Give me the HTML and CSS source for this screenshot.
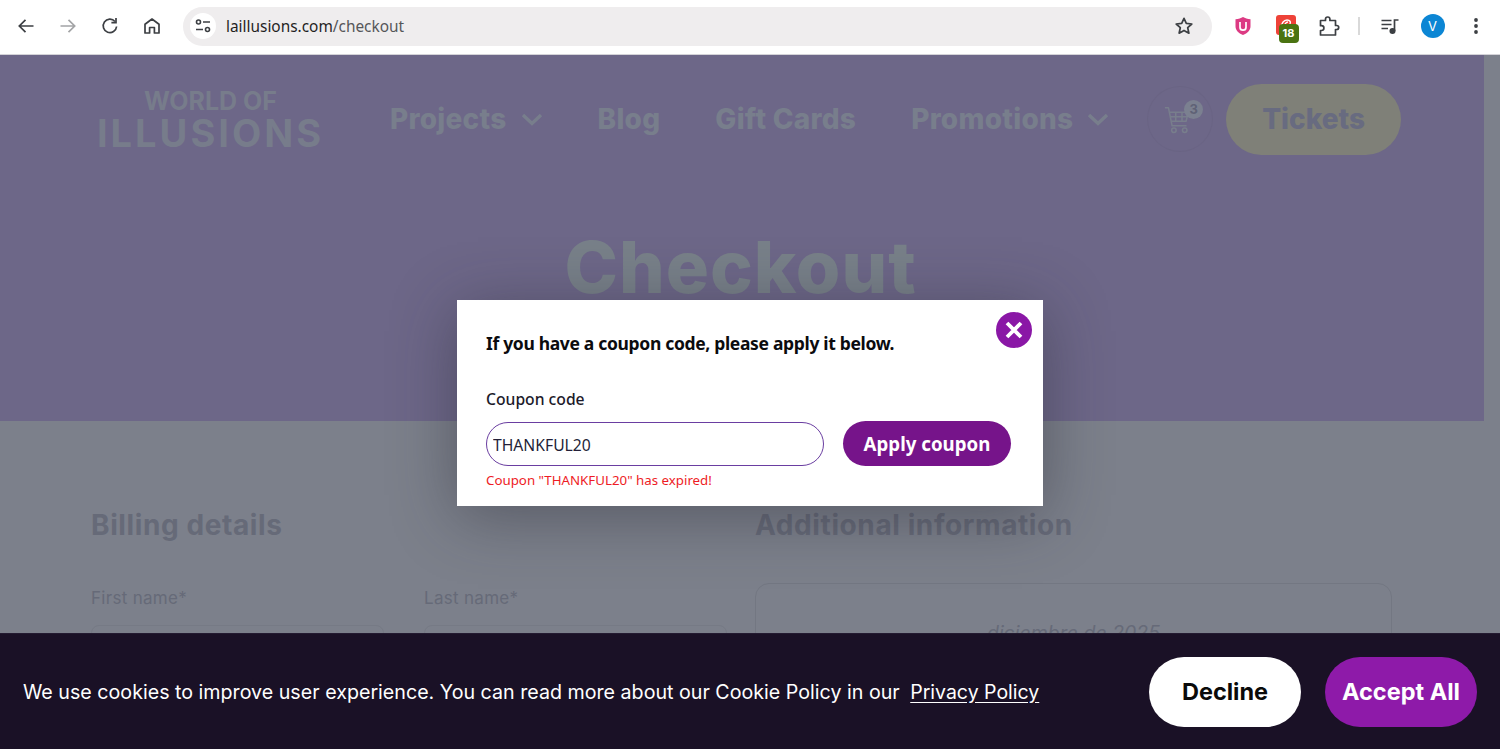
FILE: index.html
```html
<!DOCTYPE html>
<html lang="en">
<head>
  <meta charset="UTF-8">
  <meta name="viewport" content="width=device-width, initial-scale=1.0">
  <title>Checkout</title>
  <link rel="stylesheet" href="styles.css">
</head>
<body>
  <div class="toolbar">
    <button class="tool-btn" aria-label="Back">
      <svg width="20" height="20" viewBox="0 0 20 20" fill="none" stroke="#3c3f43" stroke-width="1.7"><path d="M17.5 10H3.5M9.5 3.8 3.3 10l6.2 6.2"/></svg>
    </button>
    <button class="tool-btn" aria-label="Forward">
      <svg width="20" height="20" viewBox="0 0 20 20" fill="none" stroke="#a3a4a6" stroke-width="1.7"><path d="M2.5 10h14M10.5 3.8l6.2 6.2-6.2 6.2"/></svg>
    </button>
    <button class="tool-btn" aria-label="Reload">
      <svg width="20" height="20" viewBox="0 0 20 20" fill="none" stroke="#3c3f43" stroke-width="1.7"><path d="M16.6 10.5a6.7 6.7 0 1 1-1.6-5"/><path d="M16 2v4.6h-4.6" /></svg>
    </button>
    <button class="tool-btn" aria-label="Home">
      <svg width="20" height="20" viewBox="0 0 20 20" fill="none" stroke="#3c3f43" stroke-width="1.7" stroke-linejoin="round"><path d="M3 8.3 10 3l7 5.3V17h-4.6v-5.5H7.6V17H3z"/></svg>
    </button>

    <div class="omnibox">
      <span class="site-info">
        <svg width="18" height="18" viewBox="0 0 18 18" fill="none" stroke="#3c3f43" stroke-width="1.6"><circle cx="4.5" cy="5" r="2"/><path d="M9 5h7M2 12.5h7"/><circle cx="13.5" cy="12.5" r="2"/></svg>
      </span>
      <span class="url">laillusions.com<span class="url-path">/checkout</span></span>
      <svg class="star" width="20" height="20" viewBox="0 0 20 20" fill="none" stroke="#3c3f43" stroke-width="1.7" stroke-linejoin="round"><path d="m10 2.3 2.3 5.1 5.5.6-4.1 3.7 1.2 5.5L10 14.4l-4.9 2.8 1.2-5.500L2.200 8l5.500-.6z"/></svg>
    </div>

    <div class="ext-group">
      <button class="tool-btn ext" aria-label="Shield extension">
        <svg width="18" height="20" viewBox="0 0 18 20"><path d="M9 1c2 1.300 4.500 2 7.500 2.300v7c0 4-3 7-7.500 8.700-4.500-1.700-7.500-4.700-7.500-8.700v-7C4.500 3 7 2.300 9 1z" fill="#dc3a83"/><path d="M6 6v5.200a3 3 0 0 0 6 0V6" fill="none" stroke="#fff" stroke-width="1.700"/></svg>
      </button>
      <button class="tool-btn ext" aria-label="Notes extension">
        <span class="red-ext">
          <svg width="20" height="20" viewBox="0 0 20 20"><rect width="20" height="20" rx="3" fill="#ee4238"/><path d="M5 14c0-6 3-9 6-9s4 2 3 4-4 3-5 2 1-4 3-4" fill="none" stroke="#fff" stroke-width="1.400"/></svg>
          <span class="ext-badge">18</span>
        </span>
      </button>
      <button class="tool-btn ext" aria-label="Extensions">
        <svg width="22" height="22" viewBox="0 0 22 22" fill="none" stroke="#3c3f43" stroke-width="1.700" stroke-linejoin="round"><path d="M2.500 5.500h5V4.200a2.200 2.200 0 0 1 4.400 0v1.300h5.600v5h1.200a2 2 0 0 1 0 4h-1.200v5.500h-15v-4.500h1a2.400 2.400 0 0 0 0-4.800h-1z"/></svg>
      </button>
      <span class="divider"></span>
      <button class="tool-btn ext" aria-label="Media controls">
        <svg width="20" height="20" viewBox="0 0 20 20" fill="none" stroke="#3c3f43" stroke-width="1.700"><path d="M1.500 4.500h10M1.500 8.500h10M1.500 12.500h6.500"/><circle cx="12.500" cy="15" r="2.200" fill="#3c3f43"/><path d="M14.500 15V4h4"/></svg>
      </button>
      <button class="tool-btn ext" aria-label="Profile"><span class="avatar">V</span></button>
      <button class="tool-btn ext" aria-label="Menu">
        <svg width="6" height="20" viewBox="0 0 6 20" fill="#3c3f43"><circle cx="3" cy="4" r="1.900"/><circle cx="3" cy="10" r="1.900"/><circle cx="3" cy="16" r="1.900"/></svg>
      </button>
    </div>
  </div>

  <div class="viewport">
    <div class="page">
      <section class="hero">
        <header class="site-nav">
          <div class="logo">
            <span class="logo-top">WORLD OF</span>
            <span class="logo-main">ILLUSIONS</span>
          </div>
          <nav class="nav-links">
            <a class="nav-link">Projects
              <svg width="22" height="13" viewBox="0 0 22 13" fill="none" stroke="#787e8c" stroke-width="3.400"><path d="m2 2 9 8.500L20 2"/></svg>
            </a>
            <a class="nav-link">Blog</a>
            <a class="nav-link">Gift Cards</a>
            <a class="nav-link">Promotions
              <svg width="22" height="13" viewBox="0 0 22 13" fill="none" stroke="#787e8c" stroke-width="3.400"><path d="m2 2 9 8.500L20 2"/></svg>
            </a>
          </nav>
          <div class="cart">
            <svg width="27" height="29" viewBox="0 0 30 32" fill="none" stroke="#787e8c" stroke-width="1.700" stroke-linejoin="round"><path d="M1 3h4l4 20h16"/><path d="M6 8h21l-2.500 10H8M7 13h19M13 8v10M20 8v10"/><circle cx="11" cy="28" r="2.500"/><circle cx="23" cy="28" r="2.500"/></svg>
            <span class="cart-count">3</span>
          </div>
          <a class="tickets">Tickets</a>
        </header>
        <h1 class="hero-title">Checkout</h1>
      </section>

      <section class="checkout-body">
        <div class="billing">
          <h2 class="section-title">Billing details</h2>
          <div class="name-row">
            <div class="field">
              <label class="field-label">First name*</label>
              <div class="field-input"></div>
            </div>
            <div class="field">
              <label class="field-label">Last name*</label>
              <div class="field-input"></div>
            </div>
          </div>
        </div>
        <div class="additional">
          <h2 class="section-title">Additional information</h2>
          <div class="calendar-box">
            <span class="calendar-month">diciembre de 2025</span>
          </div>
        </div>
      </section>
    </div>
    <div class="scrollbar"></div>

    <div class="modal">
      <button class="modal-close" aria-label="Close">
        <svg width="20" height="20" viewBox="0 0 20 20" fill="none" stroke="#fff" stroke-width="3.800"><path d="m3 3 14 14M17 3 3 17"/></svg>
      </button>
      <p class="modal-title">If you have a coupon code, please apply it below.</p>
      <label class="coupon-label" for="coupon">Coupon code</label>
      <div class="coupon-row">
        <input class="coupon-input" id="coupon" type="text" value="THANKFUL20">
        <button class="apply-btn">Apply coupon</button>
      </div>
      <p class="coupon-error">Coupon "THANKFUL20" has expired!</p>
    </div>

    <div class="cookie-bar">
      <p class="cookie-text">We use cookies to improve user experience. You can read more about our Cookie Policy in our <a class="cookie-link">Privacy Policy</a></p>
      <div class="cookie-actions">
        <button class="cookie-btn decline">Decline</button>
        <button class="cookie-btn accept">Accept All</button>
      </div>
    </div>
  </div>
</body>
</html>
```

FILE: styles.css
```css
* {
  box-sizing: border-box;
}

body {
  margin: 0;
  height: 749px;
  overflow: hidden;
  display: flex;
  flex-direction: column;
  font-family: Inter, "Open Sans", sans-serif;
  background-color: #7c808b;
}

button {
  font-family: inherit;
  border: none;
  padding: 0;
  cursor: pointer;
}

/* browser bar */
.toolbar {
  height: 55px;
  flex-shrink: 0;
  display: flex;
  align-items: center;
  padding: 0 0 2px 5px;
  background-color: #ffffff;
  border-bottom: 1px solid #d4d3d8;
}

.tool-btn {
  width: 42px;
  height: 36px;
  display: flex;
  align-items: center;
  justify-content: center;
  background: transparent;
}

.omnibox {
  width: 1029px;
  height: 39px;
  margin-left: 10px;
  display: flex;
  align-items: center;
  padding: 0 18px 0 7px;
  border-radius: 20px;
  background-color: #efedee;
}

.site-info {
  width: 26px;
  height: 26px;
  display: flex;
  align-items: center;
  justify-content: center;
  border-radius: 50%;
  background-color: #ffffff;
}

.url {
  margin-left: 10px;
  font-family: "Noto Sans", sans-serif;
  font-size: 15.4px;
  color: #1f1f1f;
}

.url-path {
  color: #555659;
}

.star {
  margin-left: auto;
}

.ext-group {
  display: flex;
  align-items: center;
  margin-left: 9px;
}

.ext {
  width: 43px;
}

.red-ext {
  position: relative;
  width: 26px;
  height: 28px;
  display: block;
  margin-top: 6px;
}

.ext-badge {
  position: absolute;
  left: 6px;
  top: 9px;
  width: 20px;
  height: 19px;
  border-radius: 4px;
  background-color: #4a7311;
  color: #ffffff;
  font-size: 11px;
  font-weight: 700;
  line-height: 19px;
  text-align: center;
}

.divider {
  width: 2px;
  height: 18px;
  margin: 0 8px;
  background-color: #d9d9d9;
}

.avatar {
  width: 24px;
  height: 24px;
  display: block;
  border-radius: 50%;
  background-color: #0c86d4;
  color: #ffffff;
  font-size: 13px;
  line-height: 24px;
}

/* dimmed site behind the popup */
.viewport {
  position: relative;
  flex: 1;
  display: flex;
  min-height: 0;
}

.page {
  flex: 1;
  min-width: 0;
}

.scrollbar {
  width: 16px;
  background-color: #7c808b;
}

.hero {
  height: 366px;
  display: flex;
  flex-direction: column;
  background-color: #6d6788;
}

.site-nav {
  display: flex;
  align-items: center;
  height: 128px;
  padding: 0 83px 0 98px;
}

.logo {
  width: 225px;
  display: flex;
  flex-direction: column;
  align-items: center;
  padding-top: 4px;
  color: #777c8b;
  font-weight: 700;
}

.logo-top {
  font-size: 25px;
  line-height: 22px;
  margin-bottom: 2px;
}

.logo-main {
  font-size: 38px;
  line-height: 38px;
  font-weight: 700;
  letter-spacing: 3px;
  white-space: nowrap;
}

.nav-links {
  display: flex;
  align-items: center;
  gap: 55px;
  margin-left: 67px;
}

.nav-link {
  display: flex;
  align-items: center;
  gap: 14px;
  font-size: 28px;
  font-weight: 800;
  letter-spacing: 0.25px;
  color: #787e8c;
  white-space: nowrap;
}

.cart {
  position: relative;
  width: 66px;
  height: 66px;
  margin-left: 38px;
  margin-right: 13px;
  padding-right: 5px;
  display: flex;
  align-items: center;
  justify-content: center;
  border-radius: 50%;
  border: 1px solid #6a6484;
}

.cart-count {
  position: absolute;
  top: 13px;
  right: 9px;
  width: 19px;
  height: 19px;
  border-radius: 50%;
  background-color: #7b8090;
  color: #5f6276;
  font-size: 13px;
  font-weight: 700;
  line-height: 19px;
  text-align: center;
}

.tickets {
  width: 175px;
  height: 71px;
  display: flex;
  align-items: center;
  justify-content: center;
  border-radius: 36px;
  background-color: #7f8078;
  color: #686b80;
  font-size: 28px;
  font-weight: 800;
}

.hero-title {
  margin: 44px 0 0 0;
  padding-right: 3px;
  text-align: center;
  font-size: 72px;
  line-height: 80px;
  font-weight: 800;
  letter-spacing: 1px;
  color: #788089;
}

.checkout-body {
  display: grid;
  grid-template-columns: 637px 637px;
  column-gap: 27px;
  padding: 86px 0 0 91px;
}

.section-title {
  margin: 0;
  font-size: 28px;
  line-height: 36px;
  font-weight: 700;
  letter-spacing: 0.6px;
  color: #666a78;
}

.name-row {
  display: grid;
  grid-template-columns: 293px 303px;
  column-gap: 40px;
  margin-top: 42px;
}

.field-label {
  display: block;
  font-size: 17px;
  line-height: 26px;
  letter-spacing: 0.3px;
  color: #666a78;
}

.field-input {
  height: 40px;
  margin-top: 14px;
  border: 1px solid #767a85;
  border-radius: 8px;
}

.calendar-box {
  height: 120px;
  margin-top: 40px;
  padding-top: 37px;
  text-align: center;
  border: 1px solid #737782;
  border-radius: 14px;
}

.calendar-month {
  font-size: 19.5px;
  font-style: italic;
  color: #666a78;
}

/* coupon popup */
.modal {
  position: absolute;
  left: 457px;
  top: 245px;
  width: 586px;
  height: 206px;
  padding: 31px 29px 0;
  background-color: #ffffff;
  box-shadow: 0 10px 60px rgba(40, 40, 50, 0.45);
  font-family: "Noto Sans", sans-serif;
}

.modal-close {
  position: absolute;
  top: 12px;
  right: 11px;
  width: 36px;
  height: 36px;
  display: flex;
  align-items: center;
  justify-content: center;
  border-radius: 50%;
  background-color: #8a17a6;
}

.modal-title {
  margin: 0;
  font-size: 17.5px;
  line-height: 24px;
  font-weight: 700;
  letter-spacing: -0.33px;
  color: #0b0b0e;
}

.coupon-label {
  display: block;
  margin-top: 32px;
  font-size: 15.7px;
  line-height: 24px;
  font-weight: 500;
  color: #1c1a2a;
}

.coupon-row {
  display: flex;
  align-items: center;
  margin-top: 10px;
}

.coupon-input {
  width: 338px;
  height: 44px;
  padding: 2px 7px 0 6px;
  border: 1.5px solid #6a3ea1;
  border-radius: 22px;
  outline: none;
  font-family: inherit;
  font-size: 15.7px;
  color: #231f38;
  background-color: #ffffff;
}

.apply-btn {
  width: 168px;
  height: 45px;
  margin-left: 19px;
  border-radius: 23px;
  background-color: #76148a;
  color: #ffffff;
  font-size: 18.7px;
  font-weight: 700;
}

.coupon-error {
  margin: 5px 0 0;
  font-size: 13.3px;
  line-height: 19px;
  color: #ee1c25;
}

/* cookie notice */
.cookie-bar {
  position: absolute;
  left: 0;
  right: 0;
  bottom: 0;
  height: 116px;
  display: flex;
  align-items: center;
  justify-content: space-between;
  padding: 0 23px;
  background-color: #1a1126;
  border-top: 1px solid #241b31;
}

.cookie-text {
  margin: 0;
  font-size: 19.66px;
  color: #ffffff;
}

.cookie-link {
  margin-left: 5px;
  font-size: 19.5px;
  text-decoration: underline;
  text-underline-offset: 3px;
}

.cookie-actions {
  display: flex;
  gap: 24px;
}

.cookie-btn {
  width: 152px;
  height: 70px;
  border-radius: 35px;
  font-size: 23.5px;
  font-weight: 700;
}

.decline {
  background-color: #ffffff;
  color: #0a0a0a;
}

.accept {
  background-color: #8e1aa9;
  color: #ffffff;
}
```
